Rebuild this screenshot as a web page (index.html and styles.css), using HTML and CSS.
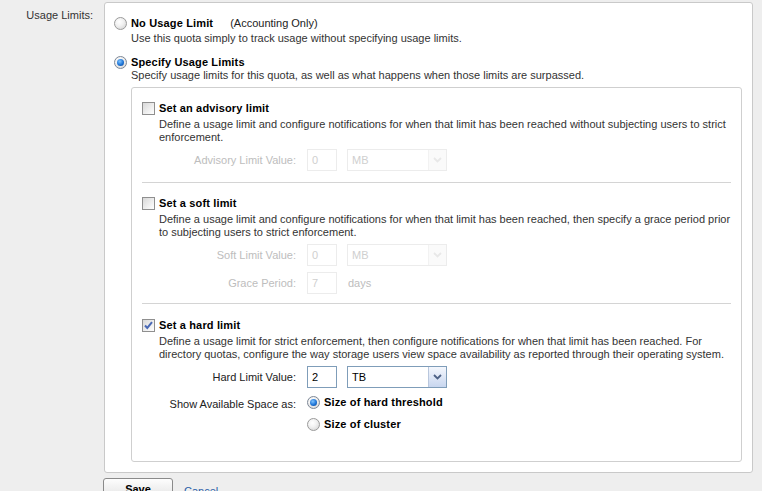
FILE: index.html
```html
<!DOCTYPE html>
<html>
<head>
<meta charset="utf-8">
<link rel="stylesheet" href="styles.css">
</head>
<body>
<div class="page">
  <div class="field-row">
    <div class="field-label">Usage Limits:</div>
    <div class="panel">
      <div class="option">
        <span class="radio"></span>
        <div class="opt-title"><b>No Usage Limit</b><span class="aside">(Accounting Only)</span></div>
        <div class="desc first-desc">Use this quota simply to track usage without specifying usage limits.</div>
      </div>
      <div class="option second">
        <span class="radio checked"></span>
        <div class="opt-title"><b>Specify Usage Limits</b></div>
        <div class="desc">Specify usage limits for this quota, as well as what happens when those limits are surpassed.</div>
        <div class="limits">
          <section class="limit">
            <span class="check"></span>
            <div class="opt-title"><b>Set an advisory limit</b></div>
            <div class="desc">Define a usage limit and configure notifications for when that limit has been reached without subjecting users to strict enforcement.</div>
            <div class="form-rows">
              <div class="form-row disabled">
                <span class="form-label">Advisory Limit Value:</span>
                <span class="input">0</span>
                <span class="select"><span class="select-text">MB</span><span class="select-btn"><svg width="9" height="6" viewBox="0 0 9 6"><path d="M1 1 L4.5 4.5 L8 1" fill="none" stroke-width="1.8"/></svg></span></span>
              </div>
            </div>
          </section>
          <section class="limit soft">
            <span class="check"></span>
            <div class="opt-title"><b>Set a soft limit</b></div>
            <div class="desc">Define a usage limit and configure notifications for when that limit has been reached, then specify a grace period prior to subjecting users to strict enforcement.</div>
            <div class="form-rows">
              <div class="form-row disabled">
                <span class="form-label">Soft Limit Value:</span>
                <span class="input">0</span>
                <span class="select"><span class="select-text">MB</span><span class="select-btn"><svg width="9" height="6" viewBox="0 0 9 6"><path d="M1 1 L4.5 4.5 L8 1" fill="none" stroke-width="1.8"/></svg></span></span>
              </div>
              <div class="form-row disabled">
                <span class="form-label">Grace Period:</span>
                <span class="input">7</span>
                <span class="unit">days</span>
              </div>
            </div>
          </section>
          <section class="limit hard">
            <span class="check checked"><svg width="11" height="11" viewBox="0 0 11 11"><path d="M2 5.5 L4.3 8 L9 2.2" fill="none" stroke="#4a69b5" stroke-width="2"/></svg></span>
            <div class="opt-title"><b>Set a hard limit</b></div>
            <div class="desc">Define a usage limit for strict enforcement, then configure notifications for when that limit has been reached. For directory quotas, configure the way storage users view space availability as reported through their operating system.</div>
            <div class="form-rows">
              <div class="form-row">
                <span class="form-label">Hard Limit Value:</span>
                <span class="input">2</span>
                <span class="select"><span class="select-text">TB</span><span class="select-btn"><svg width="9" height="6" viewBox="0 0 9 6"><path d="M1 1 L4.5 4.5 L8 1" fill="none" stroke-width="1.8"/></svg></span></span>
              </div>
              <div class="form-row avail">
                <span class="form-label">Show Available Space as:</span>
                <div class="choices">
                  <div class="choice"><span class="radio checked"></span><b>Size of hard threshold</b></div>
                  <div class="choice"><span class="radio"></span><b>Size of cluster</b></div>
                </div>
              </div>
            </div>
          </section>
        </div>
      </div>
    </div>
  </div>
  <div class="actions">
    <button class="btn">Save</button>
    <a class="link" href="#">Cancel</a>
  </div>
</div>
</body>
</html>
```

FILE: styles.css
```css
html, body {
  margin: 0;
  padding: 0;
  overflow: hidden;
  height: 491px;
}
body {
  background: #eeeeee;
  font-family: "Liberation Sans", Arial, sans-serif;
  font-size: 11px;
  color: #222;
}
b {
  font-weight: bold;
  letter-spacing: 0.15px;
}
.page {
  padding-top: 2px;
}
.field-row {
  display: flex;
  align-items: flex-start;
}
.field-label {
  width: 93px;
  text-align: right;
  padding-top: 7px;
  margin-right: 11px;
  color: #333;
  line-height: 13px;
}
.panel {
  box-sizing: border-box;
  width: 649px;
  height: 471px;
  background: #fff;
  border: 1px solid #c9c9c9;
  border-radius: 3px;
  padding: 13px 0 0 9px;
}
.option {
  display: grid;
  grid-template-columns: 13px 1fr;
  column-gap: 4px;
}
.option.second {
  margin-top: 10px;
}
.option > .radio,
.limit > .check {
  grid-column: 1;
  grid-row: 1;
  margin-top: 1px;
}
.option > *:not(.radio),
.limit > *:not(.check) {
  grid-column: 2;
}
.opt-title {
  line-height: 14px;
  color: #000;
}
.aside {
  margin-left: 17px;
  color: #222;
}
.desc {
  line-height: 13px;
  color: #333;
}
.first-desc {
  margin-top: 2px;
}
.radio {
  display: inline-block;
  width: 13px;
  height: 13px;
  box-sizing: border-box;
  border-radius: 50%;
  border: 1px solid #9a9a9a;
  background: radial-gradient(circle at 40% 35%, #ffffff 0%, #f2f2f2 40%, #cfcfcf 100%);
  position: relative;
  flex: none;
}
.radio.checked {
  border-color: #7d8796;
}
.radio.checked::after {
  content: "";
  position: absolute;
  left: 2px;
  top: 2px;
  width: 7px;
  height: 7px;
  border-radius: 50%;
  background: radial-gradient(circle at 40% 35%, #7fc3ff 0%, #1d74d6 55%, #0a3f8c 100%);
}
.limits {
  margin-top: 5px;
  margin-right: 10px;
  border: 1px solid #cfcfcf;
  border-radius: 3px;
  padding: 0 10px;
  height: 375px;
  box-sizing: border-box;
}
.limit {
  display: grid;
  grid-template-columns: 13px 1fr;
  column-gap: 4px;
  padding: 13px 0 11px;
  border-bottom: 1px solid #d4d4d4;
}
.limit.soft {
  padding-bottom: 9px;
}
.limit.hard {
  padding-top: 14px;
  border-bottom: none;
}
.check {
  display: inline-block;
  width: 13px;
  height: 13px;
  box-sizing: border-box;
  border: 1px solid #8f8f8f;
  background: linear-gradient(135deg, #d8d8d8 0%, #f4f4f4 70%, #ffffff 100%);
  position: relative;
}
.check svg {
  position: absolute;
  left: 0;
  top: 0;
}
.limit .desc {
  margin-top: 3px;
}
.form-rows {
  margin-top: 5px;
  display: flex;
  flex-direction: column;
  gap: 6px;
}
.form-row {
  display: flex;
  align-items: center;
  height: 22px;
}
.form-label {
  width: 137px;
  text-align: right;
  margin-right: 11px;
  color: #222;
  flex: none;
}
.input {
  width: 30px;
  height: 22px;
  box-sizing: border-box;
  border: 1px solid #7f9db9;
  padding: 0 4px;
  line-height: 20px;
  color: #000;
  flex: none;
}
.select {
  display: flex;
  width: 100px;
  height: 22px;
  box-sizing: border-box;
  border: 1px solid #7f9db9;
  margin-left: 10px;
  flex: none;
}
.select-text {
  flex: 1;
  padding-left: 4px;
  line-height: 20px;
  color: #000;
}
.select-btn {
  width: 17px;
  border-left: 1px solid #b9c7dd;
  background: linear-gradient(#f4f7fd, #c8d6ef);
  display: flex;
  align-items: center;
  justify-content: center;
}
.select-btn svg path {
  stroke: #4d6185;
}
.unit {
  margin-left: 11px;
}
.disabled .form-label,
.disabled .unit {
  color: #bdbdbd;
}
.disabled .input,
.disabled .select {
  border-color: #ececec;
  color: #cfcfcf;
}
.disabled .select-text {
  color: #cfcfcf;
}
.disabled .select-btn {
  border-left: 1px solid #f2f2f2;
  background: #fafafa;
}
.disabled .select-btn svg path {
  stroke: #e8e8e8;
}
.form-row.avail {
  align-items: flex-start;
  height: auto;
  margin-top: 0;
}
.avail .form-label {
  line-height: 16px;
  padding-top: 2px;
}
.choices {
  display: flex;
  flex-direction: column;
  gap: 6px;
}
.choice {
  display: flex;
  align-items: center;
  gap: 4px;
  height: 16px;
  color: #000;
}
.actions {
  display: flex;
  align-items: flex-start;
  margin: 5px 0 0 103px;
}
.btn {
  width: 70px;
  height: 22px;
  border: 1px solid #8a8a8a;
  border-radius: 3px;
  background: linear-gradient(#fdfdfd, #e2e2e2);
  font-family: "Liberation Sans", Arial, sans-serif;
  font-size: 11px;
  font-weight: bold;
  color: #000;
  padding: 0;
  line-height: 20px;
}
.link {
  margin-left: 11px;
  margin-top: 7px;
  color: #2a5ea8;
  text-decoration: none;
}
```
